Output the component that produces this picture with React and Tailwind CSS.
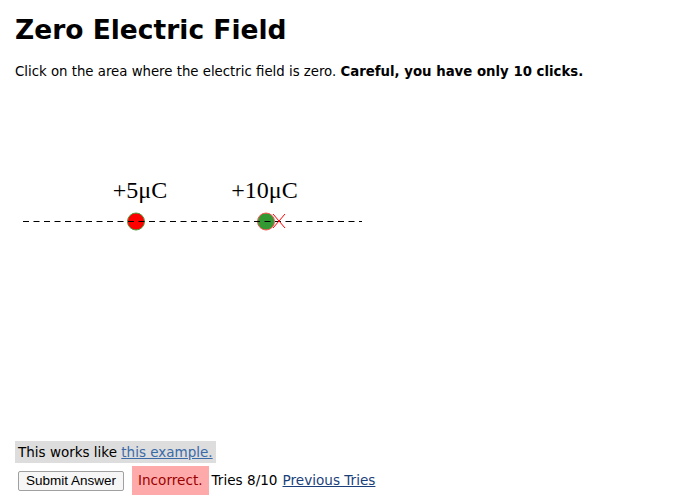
import React from "react";

const LINE_Y = 141.5;

// charges sitting on the field line, in svg coordinates
const charges = [
  { x: 121, labelX: 125, label: "+5μC", fill: "#ff0000", stroke: "#4c9a3c" },
  { x: 251, labelX: 249.5, label: "+10μC", fill: "#339933", stroke: "#ff5555" },
];

const FieldLine = () => {
  return (
    <svg width="400" height="361" className="block">
      {charges.map((c) => (
        <g key={c.label}>
          <circle cx={c.x} cy={LINE_Y} r="8.5" fill={c.fill} stroke={c.stroke} strokeWidth="1" />
          <text
            x={c.labelX}
            y="118"
            textAnchor="middle"
            fontSize="24"
            fontFamily="'Liberation Serif', 'Times New Roman', serif"
            fill="#000"
          >
            {c.label}
          </text>
        </g>
      ))}
      <line
        x1="8"
        y1={LINE_Y}
        x2="347"
        y2={LINE_Y}
        stroke="#000"
        strokeWidth="1"
        strokeDasharray="6 4.5"
      />
      {/* last click marker */}
      <g stroke="#ff0000" strokeWidth="1">
        <line x1="258" y1="134" x2="270" y2="148" />
        <line x1="270" y1="134" x2="258" y2="148" />
      </g>
    </svg>
  );
};

export default function App() {
  return (
    <div className="px-[15px] pt-[14px] text-[13.3px] text-black font-['DejaVu_Sans',Verdana,sans-serif] bg-white min-h-[501px]">
      <h1 className="text-[26.5px] font-bold leading-[32px]">Zero Electric Field</h1>
      <p className="mt-[18px] leading-[16px]">
        Click on the area where the electric field is zero.{" "}
        <b>Careful, you have only 10 clicks.</b>
      </p>
      <FieldLine />
      <div className="inline-block bg-[#dddddd] px-[3px] py-[3px] text-[13.5px] leading-[16px]">
        This works like{" "}
        <a href="#" className="text-[#3a6aa8] underline">
          this example.
        </a>
      </div>
      <div className="mt-[3px] flex items-center text-[13.6px]">
        <button className="ml-[3px] w-[106px] h-[20px] border border-[#a0a0a0] bg-[#f6f6f6] text-[13.5px] font-['Liberation_Sans',Arial,sans-serif] leading-none rounded-[2px]">
          Submit Answer
        </button>
        <span className="ml-[8px] h-[29px] px-[6px] flex items-center bg-[#ffaaaa] text-[#990000]">
          Incorrect.
        </span>
        <span className="ml-[3px]">Tries 8/10</span>
        <a href="#" className="ml-[5px] text-[#1a3f7a] underline">
          Previous Tries
        </a>
      </div>
    </div>
  );
}
